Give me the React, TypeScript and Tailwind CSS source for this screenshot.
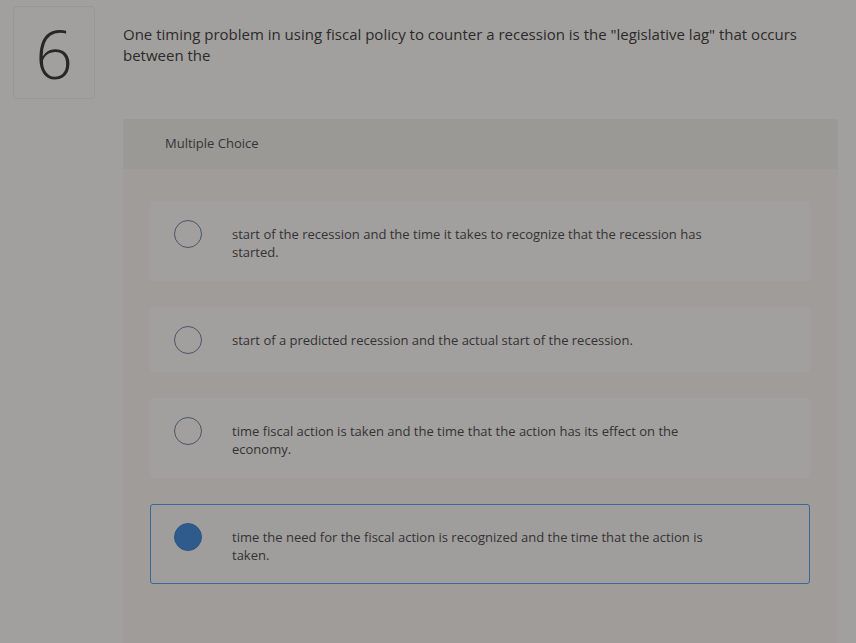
import React, { useState } from 'react';

const options = [
    'start of the recession and the time it takes to recognize that the recession has started.',
    'start of a predicted recession and the actual start of the recession.',
    'time fiscal action is taken and the time that the action has its effect on the economy.',
    'time the need for the fiscal action is recognized and the time that the action is taken.',
];

const App: React.FC = () => {
    const [selected, setSelected] = useState(3);

    return (
        <div className="min-h-screen w-full bg-[#a2a09e] text-[#2e2d2c]" style={{ fontFamily: '"Open Sans", "Liberation Sans", sans-serif' }}>
            <div className="flex pt-[6px] pl-[13px]">
                <div className="w-[82px] h-[93px] shrink-0 rounded-[4px] border border-[#9a9895] flex items-center justify-center">
                    <span className="text-[66px] font-light leading-none text-[#262727]">6</span>
                </div>

                <div className="ml-[28px] flex-1 pr-[18px]">
                    <p className="mt-[18px] max-w-[690px] text-[15px] leading-[21px] text-[#2b2a2a]">
                        One timing problem in using fiscal policy to counter a recession is the "legislative lag" that occurs between the
                    </p>

                    <div className="mt-[53px] bg-[#9f9c99] rounded-t-[2px]">
                        <div className="h-[50px] bg-[#9b9995] flex items-center pl-[42px] text-[13px] text-[#34343a]">
                            Multiple Choice
                        </div>

                        <div className="pt-[32px] pb-[80px] pl-[27px] pr-[28px] flex flex-col gap-[26px]">
                            {options.map((text, i) => {
                                const isSel = selected === i;
                                return (
                                    <button
                                        key={i}
                                        onClick={() => setSelected(i)}
                                        className={`flex items-start text-left pl-[23px] pt-[19px] pb-[19px] rounded-[3px] border ${isSel ? 'border-[#3b6699] bg-[#a09e9c]' : 'border-transparent bg-[#a2a09e]'}`}
                                    >
                                        <span className="h-[25px] w-[28px] shrink-0 flex items-center">
                                            <span
                                                className={`w-[28px] h-[28px] shrink-0 rounded-full ${isSel ? 'bg-[#2f5b8c] border border-[#2d5585]' : 'border-[1.5px] border-[#4a5566]'}`}
                                            />
                                        </span>
                                        <span className="ml-[30px] mt-[4px] max-w-[490px] text-[13px] leading-[18px] text-[#333235]">
                                            {text}
                                        </span>
                                    </button>
                                );
                            })}
                        </div>
                    </div>
                </div>
            </div>
        </div>
    );
};

export default App;
